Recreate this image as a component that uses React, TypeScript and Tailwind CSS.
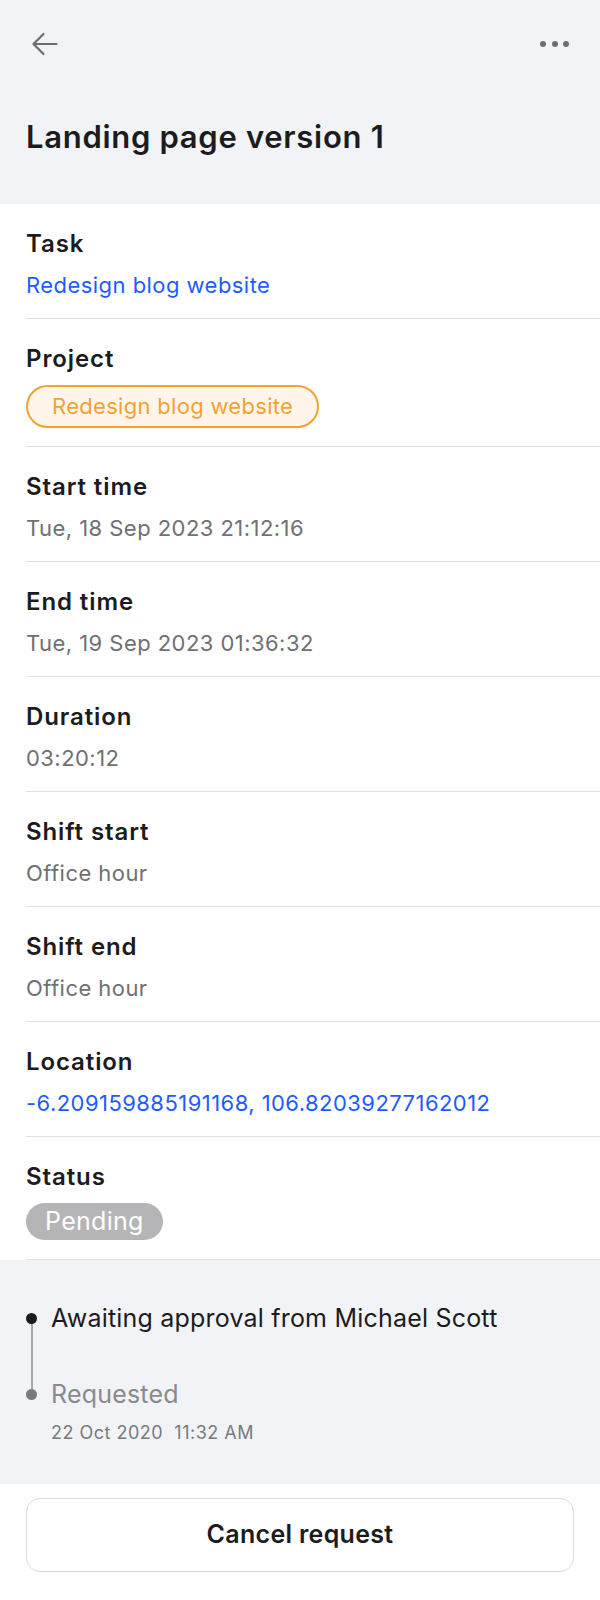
import { ReactNode } from 'react'

type Row = {
  label: string
  value: ReactNode
}

function Field({ label, children, pb = 'pb-[20px]' }: { label: string; children: ReactNode; pb?: string }) {
  return (
    <div className={`ml-[26px] border-b border-[#e3e3e6] pt-[26px] ${pb}`}>
      <div className="text-[24px] leading-[28px] font-semibold tracking-[0.9px] text-[#1c1c1e]">{label}</div>
      {children}
    </div>
  )
}

function PlainValue({ children, blue }: { children: ReactNode; blue?: boolean }) {
  return (
    <div className={`mt-[14px] text-[22px] leading-[26px] tracking-[0.45px] ${blue ? 'text-[#1f5bff]' : 'text-[#707073]'}`}>
      {children}
    </div>
  )
}

const rows: Row[] = [
  { label: 'Start time', value: 'Tue, 18 Sep 2023 21:12:16' },
  { label: 'End time', value: 'Tue, 19 Sep 2023 01:36:32' },
  { label: 'Duration', value: '03:20:12' },
  { label: 'Shift start', value: 'Office hour' },
  { label: 'Shift end', value: 'Office hour' },
]

export default function App() {
  return (
    <div className="min-h-[1600px] w-full bg-white font-['Inter',sans-serif] antialiased">
      {/* top bar + title */}
      <div className="h-[204px] bg-[#f2f3f7] px-[26px]">
        <div className="flex h-[88px] items-center justify-between">
          <svg width="27" height="24" viewBox="0 0 27 24" fill="none" className="ml-[5px]">
            <path d="M25.5 12H2.5M12.5 2L2.5 12L12.5 22" stroke="#6e6e72" strokeWidth="2.2" strokeLinecap="round" strokeLinejoin="round" />
          </svg>
          <div className="mr-[5px] flex items-center gap-[5.5px]">
            <span className="h-[6px] w-[6px] rounded-full bg-[#6e6e72]" />
            <span className="h-[6px] w-[6px] rounded-full bg-[#6e6e72]" />
            <span className="h-[6px] w-[6px] rounded-full bg-[#6e6e72]" />
          </div>
        </div>
        <h1 className="mt-[32px] text-[31px] leading-[34px] font-semibold tracking-[0.7px] text-[#1c1c1e]">
          Landing page version 1
        </h1>
      </div>

      {/* details */}
      <div className="bg-white">
        <Field label="Task">
          <PlainValue blue>Redesign blog website</PlainValue>
        </Field>
        <Field label="Project" pb="pb-[18px]">
          <div className="mt-[12px] inline-flex h-[43px] items-center rounded-full border-2 border-[#f4a233] bg-[#fff5ea] px-[24px] text-[22px] tracking-[0.3px] text-[#f4a233]">
            Redesign blog website
          </div>
        </Field>
        {rows.map((r) => (
          <Field key={r.label} label={r.label}>
            <PlainValue>{r.value}</PlainValue>
          </Field>
        ))}
        <Field label="Location">
          <PlainValue blue>-6.209159885191168, 106.82039277162012</PlainValue>
        </Field>
        <Field label="Status" pb="pb-[19px]">
          <div className="mt-[12px] inline-flex h-[37px] items-center rounded-full bg-[#b5b5b7] px-[19px] text-[25px] tracking-[0.3px] text-white">
            Pending
          </div>
        </Field>
      </div>

      {/* approval timeline */}
      <div className="bg-[#f2f3f7] pl-[26px] pt-[44px] pb-[41px]">
        <div className="relative">
          <div className="absolute left-[5px] top-[14px] h-[76px] w-[1.5px] bg-[#a9a9ad]" />
          <div className="flex items-center gap-[14px]">
            <span className="relative h-[11px] w-[11px] rounded-full bg-[#1c1c1e]" />
            <span className="text-[25px] leading-[28px] tracking-[0.2px] text-[#1c1c1e]">Awaiting approval from Michael Scott</span>
          </div>
          <div className="mt-[48px] flex items-center gap-[14px]">
            <span className="relative h-[11px] w-[11px] rounded-full bg-[#7a7a7e]" />
            <span className="text-[25px] leading-[28px] tracking-[0.2px] text-[#8a8a8e]">Requested</span>
          </div>
          <div className="ml-[25px] mt-[15px] whitespace-pre text-[18px] leading-[20px] tracking-[0.5px] text-[#7a7a7e]">
            22 Oct 2020  11:32 AM
          </div>
        </div>
      </div>

      {/* footer action */}
      <div className="px-[26px] pt-[14px] pb-[27px]">
        <button className="flex h-[74px] w-full items-center justify-center rounded-[14px] border border-[#dcdce0] bg-white text-[25px] font-semibold tracking-[0.3px] text-[#1c1c1e]">
          Cancel request
        </button>
      </div>
    </div>
  )
}
